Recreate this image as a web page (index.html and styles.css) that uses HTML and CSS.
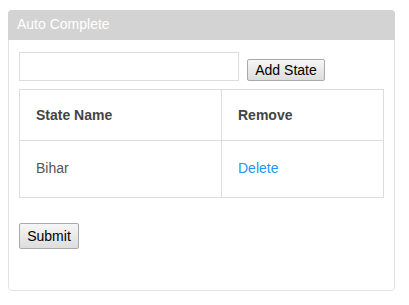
FILE: index.html
```html
<!DOCTYPE html>
<html>
<head>
<meta charset="utf-8">
<link rel="stylesheet" href="styles.css">
</head>
<body>
<div class="panel">
  <div class="panel-heading">Auto Complete</div>
  <div class="panel-body">
    <div class="add-row">
      <input class="state-input" type="text">
      <button class="btn btn-add">Add State</button>
    </div>
    <table class="states">
      <thead>
        <tr><th class="col-name">State Name</th><th>Remove</th></tr>
      </thead>
      <tbody>
        <tr><td>Bihar</td><td><a class="delete" href="#">Delete</a></td></tr>
      </tbody>
    </table>
    <div class="submit-row">
      <button class="btn btn-submit">Submit</button>
    </div>
  </div>
</div>
</body>
</html>
```

FILE: styles.css
```css
body {
  margin: 8px;
  font-family: "Liberation Sans", Arial, sans-serif;
  font-size: 14px;
  color: #555;
  background: #fff;
}
.panel {
  margin-top: 2px;
  width: 387px;
  box-sizing: border-box;
  border: 1px solid #e3e3e3;
  border-radius: 4px;
  background: #fff;
}
.panel-heading {
  height: 30px;
  line-height: 28px;
  padding-left: 9px;
  margin: -1px -1px 0 -1px;
  background: #d3d3d3;
  color: #fff;
  border-radius: 4px 4px 0 0;
  font-size: 14px;
}
.panel-body {
  padding: 12px 10px 10px 10px;
}
.add-row {
  display: flex;
  align-items: flex-end;
  gap: 8px;
}
.state-input {
  width: 220px;
  height: 29px;
  box-sizing: border-box;
  border: 1px solid #ddd;
  margin: 0;
  padding: 2px 6px;
  font-family: inherit;
  font-size: 14px;
}
.btn {
  font-family: "Liberation Sans", Arial, sans-serif;
  font-size: 14px;
  color: #000;
  background: linear-gradient(#f6f6f6, #dddddd);
  border: 1px solid #a9a9a9;
  border-radius: 2px;
  margin: 0;
  line-height: 16px;
  box-sizing: border-box;
}
.btn-add {
  height: 22px;
  width: 78px;
  padding: 2px 6px;
}
.states {
  width: 100%;
  margin-top: 8px;
  border-collapse: collapse;
  border: 1px solid #ddd;
}
.states th, .states td {
  border: 1px solid #ddd;
  text-align: left;
  padding: 0 16px;
  line-height: 20px;
}
.states th {
  height: 50px;
  font-weight: bold;
  color: #444;
}
.states td {
  height: 53px;
  padding-bottom: 3px;
}
.col-name {
  width: 169px;
}
.delete {
  color: #2196f3;
  text-decoration: none;
}
.submit-row {
  margin-top: 25px;
  margin-bottom: 31px;
}
.btn-submit {
  height: 26px;
  width: 60px;
  padding: 4px 6px;
}
```
